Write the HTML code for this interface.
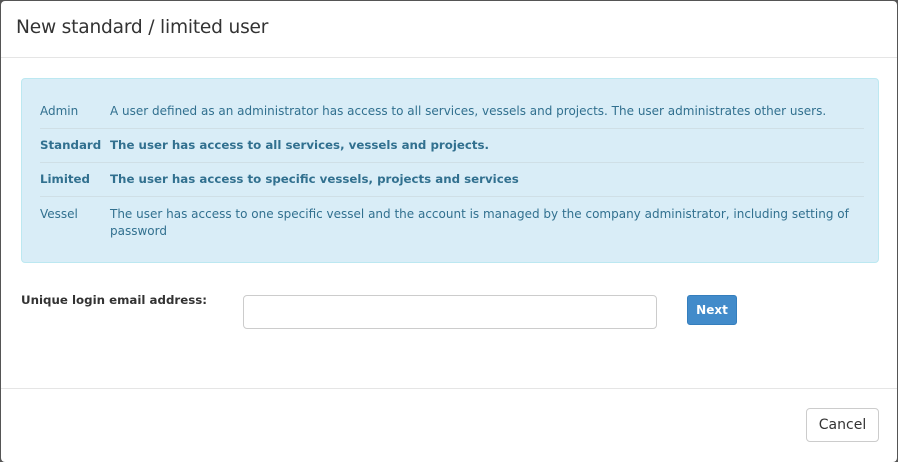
<!DOCTYPE html>
<html><head><style>
*{box-sizing:border-box;margin:0;padding:0}
body{width:898px;height:462px;background:#555;overflow:hidden;font-family:"DejaVu Sans","Liberation Sans",sans-serif}
.m{position:absolute;left:1px;top:1px;width:896px;height:461px;background:#fff;border-radius:4px}
.h{height:57px;border-bottom:1px solid #e5e5e5;padding:16px 15px}
.h span{font-size:18.6px;color:#333;font-family:"DejaVu Sans",sans-serif;letter-spacing:-0.2px}
.al{position:absolute;left:20px;top:77px;width:858px;height:185px;background:#d9edf7;border:1px solid #bce8f1;border-radius:4px;color:#31708f}
.r{position:absolute;left:18px;width:824px;font-size:12px;line-height:17px;border-top:1px solid #cfdfe6}
.r b.k,.r span.k{position:absolute;left:0;top:0}
.r .v{position:absolute;left:70px;top:0;width:760px}
.bd{font-weight:bold;font-size:11.8px}
.lab{position:absolute;left:20px;top:292px;font-size:11.8px;font-weight:bold;color:#333}
.in{position:absolute;left:242px;top:294px;width:414px;height:34px;border:1px solid #ccc;border-radius:4px}
.nx{position:absolute;left:686px;top:294px;width:50px;height:30px;background:#428bca;border:1px solid #357ebd;border-radius:3px;color:#fff;font-size:12px;font-weight:bold;text-align:center;line-height:28px}
.ft{position:absolute;left:0;top:387px;width:896px;border-top:1px solid #e5e5e5}
.cc{position:absolute;left:805px;top:407px;width:73px;height:34px;border:1px solid #ccc;border-radius:4px;font-size:14px;color:#333;text-align:center;line-height:32px}
</style></head><body><div class="m">
<div class="h"><span>New standard / limited user</span></div>
<div class="al">
<div class="r" style="top:24px;border-top:none"><span class="k">Admin</span><span class="v">A user defined as an administrator has access to all services, vessels and projects. The user administrates other users.</span></div>
<div class="r bd" style="top:49px"><b class="k" style="top:8px">Standard</b><span class="v" style="top:8px">The user has access to all services, vessels and projects.</span></div>
<div class="r bd" style="top:83px"><b class="k" style="top:8px">Limited</b><span class="v" style="top:8px">The user has access to specific vessels, projects and services</span></div>
<div class="r" style="top:117px"><span class="k" style="top:9px">Vessel</span><span class="v" style="top:9px">The user has access to one specific vessel and the account is managed by the company administrator, including setting of password</span></div>
</div>
<div class="lab">Unique login email address:</div>
<div class="in"></div>
<div class="nx">Next</div>
<div class="ft"></div>
<div class="cc">Cancel</div>
</div></body></html>
